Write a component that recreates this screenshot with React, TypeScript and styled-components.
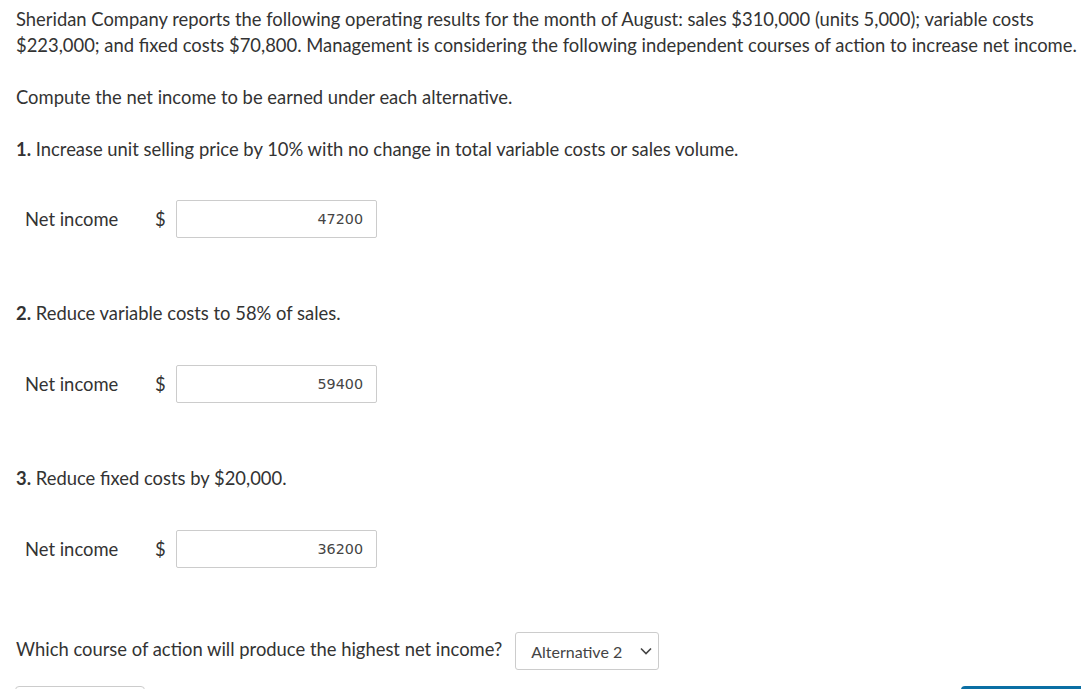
import React from "react";
import styled, { createGlobalStyle } from "styled-components";

const GlobalStyle = createGlobalStyle`
  html, body { margin: 0; padding: 0; background: #fff; }
  body { font-family: Lato, "Noto Sans", sans-serif; color: #333; overflow: hidden; }
`;

const Page = styled.div`
  padding: 6px 0 0 16px;
  height: 689px;
  box-sizing: border-box;
  position: relative;
  overflow: hidden;
`;

const Para = styled.p<{ $mt?: number }>`
  margin: ${(p) => p.$mt ?? 0}px 0 0 0;
  font-size: 18.4px;
  line-height: 26px;
`;

const Row = styled.div<{ $mt: number }>`
  display: flex;
  align-items: center;
  margin-top: ${(p) => p.$mt}px;
  padding-left: 9px;
`;

const Label = styled.span`
  font-size: 18.4px;
  width: 130px;
`;

const Dollar = styled.span`
  font-size: 18.4px;
  width: 21px;
`;

const Field = styled.div`
  box-sizing: border-box;
  width: 201px;
  height: 38px;
  border: 1px solid #ccc;
  border-radius: 2px;
  display: flex;
  align-items: center;
  justify-content: flex-end;
  padding-right: 13px;
  font-family: "DejaVu Sans", Verdana, sans-serif;
  font-size: 14.3px;
  color: #444;
`;

const QuestionRow = styled.div`
  display: flex;
  align-items: flex-start;
  margin-top: 68px;
  gap: 13px;
`;

const Select = styled.div`
  width: 144px;
  height: 38px;
  margin-top: -4px;
  box-sizing: border-box;
  border: 1px solid #ccc;
  border-radius: 3px;
  display: flex;
  align-items: center;
  justify-content: space-between;
  padding: 0 6px 0 15px;
  font-size: 16px;
  color: #444;
`;

const BottomLeft = styled.div`
  position: absolute;
  left: 15px;
  top: 686px;
  width: 128px;
  height: 20px;
  border: 1px solid #ccc;
  border-radius: 4px;
`;

const BottomRight = styled.div`
  position: absolute;
  left: 961px;
  top: 686px;
  width: 130px;
  height: 20px;
  background: #0b6fa4;
  border-radius: 4px;
`;

export default function App() {
  return (
    <>
      <GlobalStyle />
      <Page>
        <Para>
          Sheridan Company reports the following operating results for the month of August: sales $310,000 (units 5,000); variable costs
          $223,000; and fixed costs $70,800. Management is considering the following independent courses of action to increase net income.
        </Para>
        <Para $mt={26}>Compute the net income to be earned under each alternative.</Para>
        <Para $mt={26}>
          <b>1.</b> Increase unit selling price by 10% with no change in total variable costs or sales volume.
        </Para>
        <Row $mt={38}>
          <Label>Net income</Label>
          <Dollar>$</Dollar>
          <Field>47200</Field>
        </Row>
        <Para $mt={62}>
          <b>2.</b> Reduce variable costs to 58% of sales.
        </Para>
        <Row $mt={39}>
          <Label>Net income</Label>
          <Dollar>$</Dollar>
          <Field>59400</Field>
        </Row>
        <Para $mt={62}>
          <b>3.</b> Reduce fixed costs by $20,000.
        </Para>
        <Row $mt={39}>
          <Label>Net income</Label>
          <Dollar>$</Dollar>
          <Field>36200</Field>
        </Row>
        <QuestionRow>
          <Para>Which course of action will produce the highest net income?</Para>
          <Select>
            <span>Alternative 2</span>
            <svg width="12" height="8" viewBox="0 0 12 8">
              <path d="M1 1.5 L6 6.5 L11 1.5" fill="none" stroke="#444" strokeWidth="1.6" />
            </svg>
          </Select>
        </QuestionRow>
        <BottomLeft />
        <BottomRight />
      </Page>
    </>
  );
}
